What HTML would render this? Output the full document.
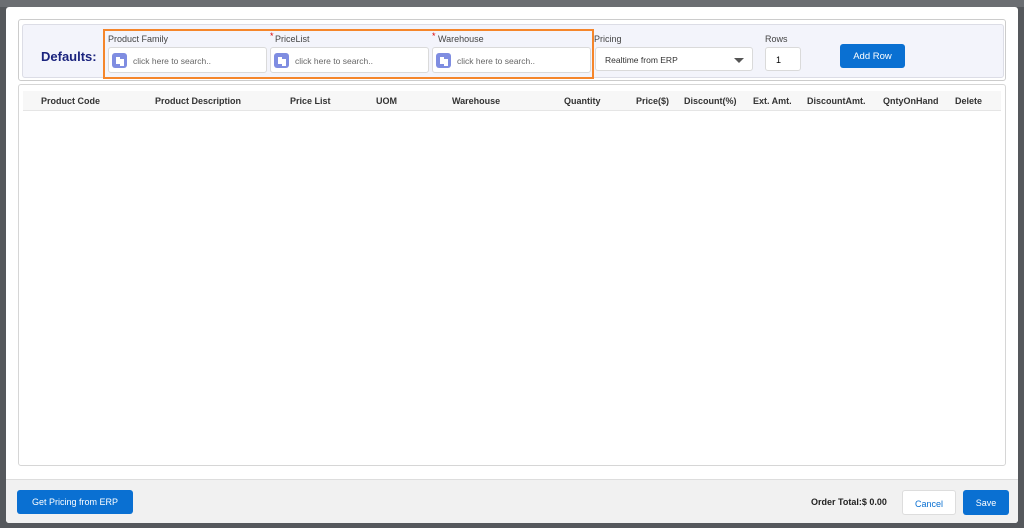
<!DOCTYPE html>
<html><head><style>
*{box-sizing:border-box;margin:0;padding:0}
body{width:1024px;height:528px;background:#55585c;font-family:"Liberation Sans",sans-serif;position:relative;overflow:hidden}
.top{position:absolute;left:0;top:0;width:1024px;height:7px;background:#6b6e72}
.modal{position:absolute;left:6px;top:7px;width:1012px;height:516px;background:#fff;border-radius:3px;overflow:hidden}
.outer{position:absolute;left:12px;top:12px;width:988px;height:62px;border:1px solid #ccc;border-radius:3px}
.panel{position:absolute;left:16px;top:17px;width:982px;height:54px;background:#f3f4fb;border:1px solid #dcdde6;border-radius:3px}
.def{position:absolute;left:35px;top:42px;font-size:13px;font-weight:bold;color:#1a237e}
.orange{position:absolute;left:97px;top:22px;width:491px;height:50px;border:2px solid #f5862b}
.lbl{position:absolute;font-size:9px;color:#444}
.req{color:#d00;font-size:9px;position:absolute}
.inp{position:absolute;height:26px;background:#fff;border:1px solid #dadada;border-radius:3px;font-size:8.5px;color:#666;padding:8px 0 0 24px}
.ico{position:absolute;left:3px;top:5px;width:15px;height:15px;background:#7f8de1;border-radius:3px}
.ico:after{content:"";position:absolute;left:4px;top:4px;width:4px;height:7px;background:#fff;box-shadow:4px 2px 0 -0px #fff}
.sel{position:absolute;left:589px;top:40px;width:158px;height:24px;background:#fff;border:1px solid #dadada;border-radius:3px;font-size:8.5px;color:#333;padding:7px 0 0 9px}
.tri{position:absolute;right:8px;top:10px;border-left:5px solid transparent;border-right:5px solid transparent;border-top:5px solid #555}
.rows{position:absolute;left:759px;top:40px;width:36px;height:24px;background:#fff;border:1px solid #dadada;border-radius:3px;font-size:9px;padding:7px 0 0 10px}
.btn{position:absolute;background:#0a70d2;color:#fff;border-radius:3px;font-size:9.5px;text-align:center}
.table{position:absolute;left:12px;top:77px;width:988px;height:382px;border:1px solid #d6d6d6;border-radius:3px}
.th{position:absolute;top:6px;left:4px;width:978px;height:20px;background:#f7f7f7;border-bottom:1px solid #e5e5e5}
.th span{position:absolute;top:5px;font-size:9px;font-weight:bold;color:#333;white-space:nowrap}
.foot{position:absolute;left:0;top:472px;width:1012px;height:44px;background:#f1f1f1;border-top:1px solid #ddd}
</style></head><body>
<div class="top"></div>
<div class="modal">
<div class="outer"></div>
<div class="panel"></div>
<div class="def">Defaults:</div>
<div class="orange"></div>
<div class="lbl" style="left:102px;top:27px">Product Family</div>
<div class="req" style="left:264px;top:24px">*</div><div class="lbl" style="left:269px;top:27px">PriceList</div>
<div class="req" style="left:426px;top:24px">*</div><div class="lbl" style="left:432px;top:27px">Warehouse</div>
<div class="inp" style="left:102px;top:40px;width:159px"><div class="ico"></div>click here to search..</div>
<div class="inp" style="left:264px;top:40px;width:159px"><div class="ico"></div>click here to search..</div>
<div class="inp" style="left:426px;top:40px;width:159px"><div class="ico"></div>click here to search..</div>
<div class="lbl" style="left:588px;top:27px">Pricing</div>
<div class="sel">Realtime from ERP<div class="tri"></div></div>
<div class="lbl" style="left:759px;top:27px">Rows</div>
<div class="rows">1</div>
<div class="btn" style="left:834px;top:37px;width:65px;height:24px;padding-top:7px">Add Row</div>
<div class="table"><div class="th">
<span style="left:18px">Product Code</span>
<span style="left:132px">Product Description</span>
<span style="left:267px">Price List</span>
<span style="left:353px">UOM</span>
<span style="left:429px">Warehouse</span>
<span style="left:541px">Quantity</span>
<span style="left:613px">Price($)</span>
<span style="left:661px">Discount(%)</span>
<span style="left:730px">Ext. Amt.</span>
<span style="left:784px">DiscountAmt.</span>
<span style="left:860px">QntyOnHand</span>
<span style="left:932px">Delete</span>
</div></div>
<div class="foot">
<div class="btn" style="left:11px;top:10px;width:116px;height:24px;padding-top:7px;font-size:9px">Get Pricing from ERP</div>
<div style="position:absolute;left:805px;top:17px;font-size:9px;font-weight:bold;color:#222">Order Total:$ 0.00</div>
<div style="position:absolute;left:896px;top:10px;width:54px;height:25px;background:#fff;border:1px solid #ddd;border-radius:3px;color:#0a70d2;font-size:9px;text-align:center;padding-top:8px">Cancel</div>
<div class="btn" style="left:957px;top:10px;width:46px;height:25px;padding-top:8px;font-size:9px">Save</div>
</div>
</div>
</body></html>
